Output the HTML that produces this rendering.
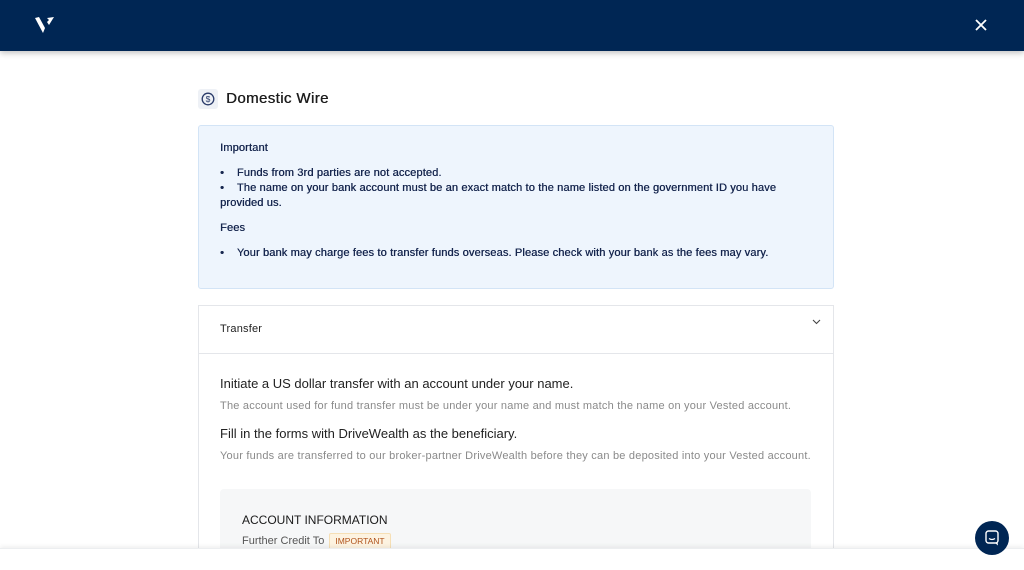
<!DOCTYPE html>
<html><head><meta charset="utf-8"><style>
*{margin:0;padding:0;box-sizing:border-box}
body{width:1024px;height:570px;overflow:hidden;background:#fff;font-family:"Liberation Sans",sans-serif;position:relative}
.hdr{position:absolute;left:0;top:0;width:1024px;height:51px;background:#002654;box-shadow:0 2px 6px rgba(0,0,0,.25)}
.a{position:absolute;white-space:nowrap}
.blue{position:absolute;left:198px;top:125px;width:636px;height:164px;background:#eef5fd;border:1px solid #d3e4f6;border-radius:3px}
.bt{color:#17274f;font-size:11px;letter-spacing:.15px;text-shadow:0.35px 0 0 #17274f}
.card{position:absolute;left:198px;top:305px;width:636px;height:260px;border:1px solid #e4e6ea}
.gray{position:absolute;left:220px;top:489px;width:591px;height:80px;background:#f6f7f8;border-radius:4px}
.foot{position:absolute;left:0;top:548px;width:1024px;height:22px;background:#fff;box-shadow:0 -2px 4px rgba(0,0,0,.06);border-top:1px solid #eceef0}
.g{font-size:11px;color:#8a8a8a;letter-spacing:.22px}
</style></head><body>
<div class="hdr">
<svg class="a" style="left:34px;top:16px" width="22" height="18" viewBox="0 0 22 18"><path d="M1 2 L5 1 L11 12 L9 17 Z" fill="#fff"/><path d="M13 2 L20 1 L15 9 L13 6 L15 4 Z" fill="#fff"/></svg>
<svg class="a" style="left:975px;top:19px" width="12" height="12" viewBox="0 0 12 12"><path d="M1 1L11 11M11 1L1 11" stroke="#fff" stroke-width="1.8"/></svg>
</div>
<div class="a" style="left:198px;top:89px;width:20px;height:20px;background:#eef1f6;border-radius:3px"></div>
<svg class="a" style="left:201px;top:92px" width="14" height="14" viewBox="0 0 14 14"><circle cx="7" cy="7" r="5.8" fill="none" stroke="#2a3b6a" stroke-width="1.3"/><text x="7" y="10.2" font-size="8.5" text-anchor="middle" fill="#2a3b6a" font-family="Liberation Sans">$</text></svg>
<div class="a" style="left:226px;top:90px;font-size:15px;color:#1d1d1d;letter-spacing:.4px;text-shadow:0.4px 0 0 #1d1d1d">Domestic Wire</div>
<div class="blue"></div>
<div class="a bt" style="left:220px;top:142px">Important</div>
<div class="a bt" style="left:220px;top:167px">•&nbsp;&nbsp;&nbsp;&nbsp;Funds from 3rd parties are not accepted.</div>
<div class="a bt" style="left:220px;top:182px">•&nbsp;&nbsp;&nbsp;&nbsp;The name on your bank account must be an exact match to the name listed on the government ID you have</div>
<div class="a bt" style="left:220px;top:197px">provided us.</div>
<div class="a bt" style="left:220px;top:222px">Fees</div>
<div class="a bt" style="left:220px;top:247px">•&nbsp;&nbsp;&nbsp;&nbsp;Your bank may charge fees to transfer funds overseas. Please check with your bank as the fees may vary.</div>
<div class="card"><div style="position:absolute;left:0;top:47px;width:634px;border-top:1px solid #e4e6ea"></div></div>
<div class="a" style="left:220px;top:323px;font-size:11px;color:#222;letter-spacing:.2px">Transfer</div>
<svg class="a" style="left:812px;top:319px" width="9" height="6" viewBox="0 0 9 6"><path d="M1 1L4.5 4.5L8 1" fill="none" stroke="#444" stroke-width="1.1"/></svg>
<div class="a" style="left:220px;top:376px;font-size:13px;color:#222">Initiate a US dollar transfer with an account under your name.</div>
<div class="a g" style="left:220px;top:400px">The account used for fund transfer must be under your name and must match the name on your Vested account.</div>
<div class="a" style="left:220px;top:426px;font-size:13px;color:#222">Fill in the forms with DriveWealth as the beneficiary.</div>
<div class="a g" style="left:220px;top:450px">Your funds are transferred to our broker-partner DriveWealth before they can be deposited into your Vested account.</div>
<div class="gray"></div>
<div class="a" style="left:242px;top:513px;font-size:12px;color:#1a1a1a">ACCOUNT INFORMATION</div>
<div class="a" style="left:242px;top:535px;font-size:11px;color:#555">Further Credit To</div>
<div class="a" style="left:329px;top:533px;width:62px;height:17px;background:#fdf3e1;border:1px solid #f6dfb5;border-radius:2px;font-size:8.5px;color:#b0531c;text-align:center;line-height:15px">IMPORTANT</div>
<div class="foot"></div>
<div class="a" style="left:975px;top:521px;width:34px;height:34px;border-radius:50%;background:#002654"></div>
<svg class="a" style="left:985px;top:530px" width="14" height="16" viewBox="0 0 14 16"><rect x="1" y="1" width="12" height="12" rx="2.5" fill="none" stroke="#fff" stroke-width="1.4"/><path d="M4 8.5Q7 10.5 10 8.5" fill="none" stroke="#fff" stroke-width="1.2"/><path d="M10 13L13 15.5L12.5 12Z" fill="#fff"/></svg>
</body></html>
